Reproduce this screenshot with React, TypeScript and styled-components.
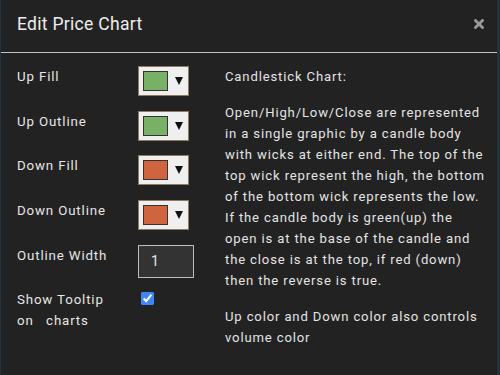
import { Fragment } from 'react'
import styled, { createGlobalStyle } from 'styled-components'

const GlobalStyle = createGlobalStyle`
  html, body {
    margin: 0;
    padding: 0;
    background: #243240;
    font-family: Roboto, "Liberation Sans", sans-serif;
  }
`

type Setting = {
  label: string
  color: string
}

const colorSettings: Array<Setting> = [
  { label: 'Up Fill', color: '#78b068' },
  { label: 'Up Outline', color: '#78b068' },
  { label: 'Down Fill', color: '#cf653f' },
  { label: 'Down Outline', color: '#cf653f' },
]

// wrapped the same way as the original dialog
const candleLines = [
  'Open/High/Low/Close are represented',
  'in a single graphic by a candle body',
  'with wicks at either end. The top of the',
  'top wick represent the high, the bottom',
  'of the bottom wick represents the low.',
  'If the candle body is green(up) the',
  'open is at the base of the candle and',
  'the close is at the top, if red (down)',
  'then the reverse is true.',
]

const Dialog = styled.div`
  margin-left: 1px;
  width: 496px;
  height: 375px;
  background: #222222;
  color: #e6e6e6;
  overflow: hidden;
`

const Header = styled.div`
  height: 53px;
  display: flex;
  align-items: center;
  justify-content: space-between;
  padding: 0 13px 5px 16px;
  box-sizing: border-box;
  border-bottom: 1px solid #c4c4c4;
`

const Title = styled.h1`
  margin: 0;
  font-size: 17.5px;
  font-weight: 400;
  letter-spacing: 0.3px;
  color: #ededed;
`

const CloseButton = styled.button`
  background: transparent;
  border: none;
  padding: 0;
  cursor: pointer;
  display: flex;
  color: #9a9a9a;
`

const Body = styled.div`
  display: flex;
  padding: 13px 0 0 16px;
`

const Settings = styled.div`
  width: 208px;
  display: grid;
  grid-template-columns: 121px auto;
  grid-auto-rows: 44.7px;
  align-items: start;
`

const Label = styled.div`
  font-size: 13.3px;
  line-height: 21px;
  letter-spacing: 0.85px;
  color: #e6e6e6;
`

const ColorButton = styled.button`
  width: 51px;
  height: 30px;
  box-sizing: border-box;
  background: #efefef;
  border: 1px solid #8f7a62;
  border-radius: 0;
  padding: 0 0 0 4px;
  display: flex;
  align-items: center;
  gap: 7px;
  cursor: pointer;
`

const Swatch = styled.span<{ $color: string }>`
  width: 25px;
  height: 20px;
  box-sizing: border-box;
  border: 1px solid #333;
  background: ${(p) => p.$color};
`

const WidthInput = styled.input`
  width: 56px;
  height: 33px;
  box-sizing: border-box;
  background: #333333;
  border: 1px solid #bdbdbd;
  color: #e8e8e8;
  font-family: Roboto, "Liberation Sans", sans-serif;
  font-size: 14px;
  padding: 0 0 0 12px;
  outline: none;
`

const Check = styled.input`
  width: 13px;
  height: 13px;
  margin: 3px 0 0 3px;
  accent-color: #3b87f5;
`

const Info = styled.div`
  width: 268px;
  white-space: nowrap;
`

const InfoText = styled.p`
  margin: 0 0 15px;
  font-size: 13.1px;
  line-height: 21px;
  letter-spacing: 0.85px;
  color: #e4e4e4;
`

const Arrow = () => (
  <svg width='8' height='8' viewBox='0 0 8 8'>
    <polygon points='0,0 8,0 4,8' fill='#111' />
  </svg>
)

const CloseIcon = () => (
  <svg width='10' height='10' viewBox='0 0 10 10'>
    <path d='M1.5 1.5 L8.5 8.5 M8.5 1.5 L1.5 8.5' stroke='currentColor' strokeWidth='2.8' strokeLinecap='square' />
  </svg>
)

export default function App() {
  return (
    <>
      <GlobalStyle />
      <Dialog>
        <Header>
          <Title>Edit Price Chart</Title>
          <CloseButton aria-label='close'>
            <CloseIcon />
          </CloseButton>
        </Header>
        <Body>
          <Settings>
            {colorSettings.map((s) => (
              <Fragment key={s.label}>
                <Label>{s.label}</Label>
                <ColorButton>
                  <Swatch $color={s.color} />
                  <Arrow />
                </ColorButton>
              </Fragment>
            ))}
            <Label>Outline Width</Label>
            <WidthInput defaultValue='1' />
            <Label>
              Show Tooltip
              <br />
              on&nbsp;&nbsp;&nbsp;charts
            </Label>
            <Check type='checkbox' defaultChecked />
          </Settings>
          <Info>
            <InfoText>Candlestick Chart:</InfoText>
            <InfoText>
              {candleLines.map((line, i) => (
                <Fragment key={i}>
                  {line}
                  {i < candleLines.length - 1 && <br />}
                </Fragment>
              ))}
            </InfoText>
            <InfoText>
              Up color and Down color also controls
              <br />
              volume color
            </InfoText>
          </Info>
        </Body>
      </Dialog>
    </>
  )
}
